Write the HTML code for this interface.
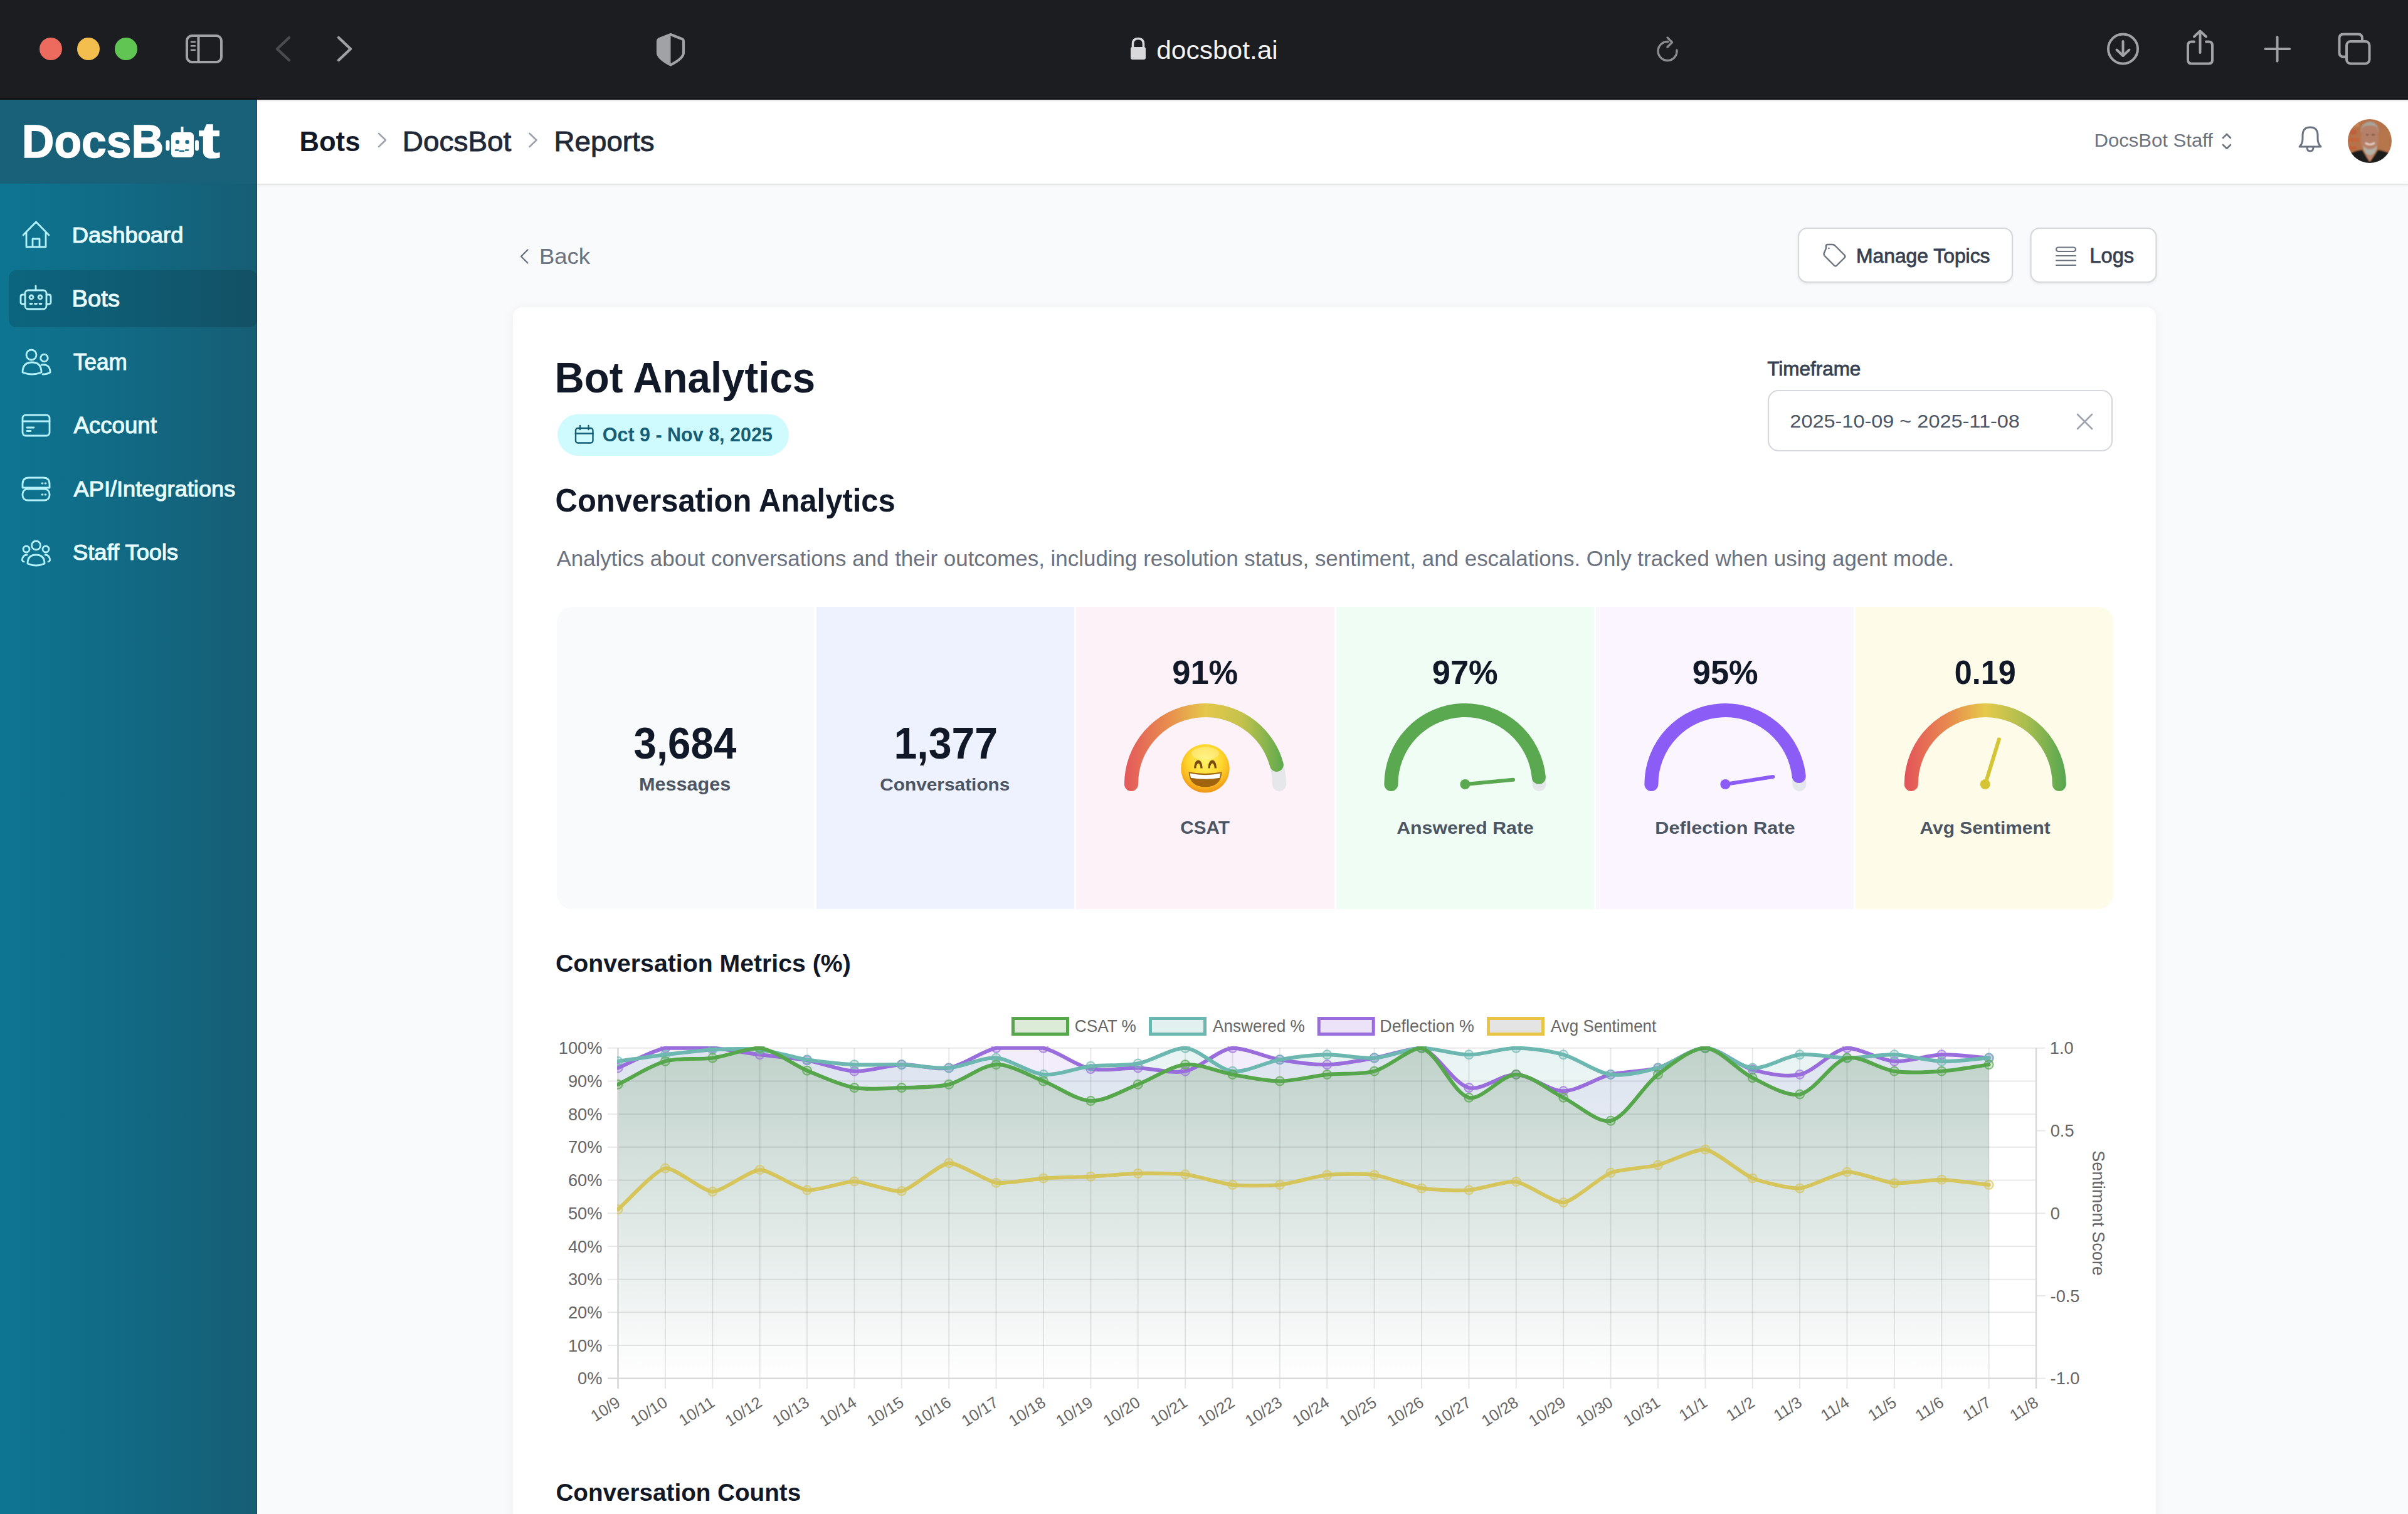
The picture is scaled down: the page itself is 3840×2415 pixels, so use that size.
<!DOCTYPE html>
<html><head><meta charset="utf-8"><title>DocsBot Reports</title>
<style>
html,body{margin:0;padding:0;width:3840px;height:2415px;overflow:hidden;background:#f9fafb}
svg{display:block}
text{font-family:"Liberation Sans",sans-serif;white-space:pre}
</style></head><body>
<svg width="3840" height="2415" viewBox="0 0 3840 2415">
<defs>
<linearGradient id="sbg" x1="0" y1="0" x2="410" y2="0" gradientUnits="userSpaceOnUse">
  <stop offset="0" stop-color="#0d7592"/>
  <stop offset="1" stop-color="#165d74"/>
</linearGradient>
<linearGradient id="sbg2" x1="0" y1="0" x2="0" y2="1">
  <stop offset="0" stop-color="#000" stop-opacity="0"/>
  <stop offset="1" stop-color="#000" stop-opacity="0"/>
</linearGradient>
<filter id="shCard" x="-5%" y="-5%" width="110%" height="110%">
  <feDropShadow dx="0" dy="2" stdDeviation="8" flood-color="#000" flood-opacity="0.05"/>
</filter>
<filter id="shBtn" x="-10%" y="-20%" width="120%" height="150%">
  <feDropShadow dx="0" dy="2" stdDeviation="2" flood-color="#000" flood-opacity="0.07"/>
</filter>
<filter id="shHdr" x="0" y="-50%" width="100%" height="200%">
  <feDropShadow dx="0" dy="2" stdDeviation="2" flood-color="#000" flood-opacity="0.06"/>
</filter>
<linearGradient id="gCsat" x1="1793" y1="0" x2="2052" y2="0" gradientUnits="userSpaceOnUse">
  <stop offset="0" stop-color="#e4585c"/>
  <stop offset="0.28" stop-color="#e88f4d"/>
  <stop offset="0.5" stop-color="#e5c74b"/>
  <stop offset="0.72" stop-color="#c5c24c"/>
  <stop offset="1" stop-color="#55a84e"/>
</linearGradient>
<linearGradient id="gSent" x1="3036" y1="0" x2="3296" y2="0" gradientUnits="userSpaceOnUse">
  <stop offset="0" stop-color="#e4525a"/>
  <stop offset="0.3" stop-color="#e8904e"/>
  <stop offset="0.5" stop-color="#e6c94a"/>
  <stop offset="0.75" stop-color="#a9bd4f"/>
  <stop offset="1" stop-color="#52a64f"/>
</linearGradient>
<radialGradient id="emo" cx="0.5" cy="0.35" r="0.62">
  <stop offset="0" stop-color="#fff36a"/>
  <stop offset="0.55" stop-color="#fed72e"/>
  <stop offset="0.85" stop-color="#f8b51e"/>
  <stop offset="1" stop-color="#f09a1a"/>
</radialGradient>
<clipPath id="avc"><circle cx="3779" cy="225" r="35"/></clipPath>
<filter id="avblur" x="-10%" y="-10%" width="120%" height="120%"><feGaussianBlur stdDeviation="0.9"/></filter>
<clipPath id="chartClip"><rect x="984" y="1669" width="2264" height="531"/></clipPath>
</defs>
<rect x="0" y="0" width="3840" height="2415" fill="#f9fafb"/>
<rect x="0" y="0" width="3840" height="159" fill="#1c1d20"/>
<rect x="0" y="157" width="3840" height="2" fill="#0b0c0e"/>
<rect x="0" y="159" width="410" height="2256" fill="url(#sbg)"/>
<rect x="0" y="159" width="410" height="134" fill="#186178"/>
<rect x="408" y="159" width="2" height="2256" fill="#000" fill-opacity="0.12"/>
<rect x="410" y="159" width="3430" height="135" fill="#ffffff" filter="url(#shHdr)"/>
<rect x="410" y="293" width="3430" height="2" fill="#e5e7eb"/>
<defs><linearGradient id="hdrTop" x1="0" y1="0" x2="0" y2="1"><stop offset="0" stop-color="#000" stop-opacity="0.13"/><stop offset="1" stop-color="#000" stop-opacity="0"/></linearGradient></defs>
<rect x="410" y="159" width="3430" height="4" fill="url(#hdrTop)"/>
<circle cx="81" cy="78" r="18" fill="#ed6a5e"/>
<circle cx="141" cy="78" r="18" fill="#f4be4f"/>
<circle cx="201" cy="78" r="18" fill="#61c554"/>
<rect x="298" y="57" width="55" height="42" rx="8" fill="none" stroke="#a1a2a6" stroke-width="4"/>
<line x1="316.5" y1="57" x2="316.5" y2="99" stroke="#a1a2a6" stroke-width="4"/>
<line x1="305" y1="66.7" x2="311" y2="66.7" stroke="#a1a2a6" stroke-width="2.6" stroke-linecap="round"/>
<line x1="305" y1="73.3" x2="311" y2="73.3" stroke="#a1a2a6" stroke-width="2.6" stroke-linecap="round"/>
<line x1="305" y1="79.8" x2="311" y2="79.8" stroke="#a1a2a6" stroke-width="2.6" stroke-linecap="round"/>
<polyline points="461,60 442,78 461,96" fill="none" stroke="#4a4b4f" stroke-width="4.4" stroke-linecap="round" stroke-linejoin="round"/>
<polyline points="540,60 559,78 540,96" fill="none" stroke="#a1a2a6" stroke-width="4.4" stroke-linecap="round" stroke-linejoin="round"/>
<path d="M1069.5,55 L1088.5,62.5 Q1090,63.5 1090,66 L1090,84 Q1090,93 1069.5,103.5 Q1049,93 1049,84 L1049,66 Q1049,63.5 1050.5,62.5 Z" fill="none" stroke="#a1a2a6" stroke-width="4.2" stroke-linejoin="round"/>
<path d="M1069.5,55 L1050.5,62.5 Q1049,63.5 1049,66 L1049,84 Q1049,93 1069.5,103.5 Z" fill="#a1a2a6"/>
<path d="M1806.5,76 L1806.5,70 Q1806.5,61.5 1815,61.5 Q1823.5,61.5 1823.5,70 L1823.5,76" fill="none" stroke="#d9d9db" stroke-width="3.6"/>
<rect x="1803" y="75" width="24" height="20" rx="3" fill="#d9d9db"/>
<text x="1844.19" y="93.5" font-size="40" font-weight="400" fill="#f4f4f6" textLength="193.62" lengthAdjust="spacingAndGlyphs">docsbot.ai</text>
<path d="M2674,80 A15,15 0 1 1 2660,66.5" fill="none" stroke="#8b8c8f" stroke-width="3.4" stroke-linecap="round"/>
<polyline points="2659,60 2666.5,67.5 2659,75" fill="none" stroke="#8b8c8f" stroke-width="3.4" stroke-linecap="round" stroke-linejoin="round"/>
<circle cx="3385.5" cy="78" r="23.5" fill="none" stroke="#a1a2a6" stroke-width="4"/>
<line x1="3385.5" y1="66" x2="3385.5" y2="88" stroke="#a1a2a6" stroke-width="4" stroke-linecap="round"/>
<polyline points="3375.5,79.5 3385.5,89 3395.5,79.5" fill="none" stroke="#a1a2a6" stroke-width="4" stroke-linecap="round" stroke-linejoin="round"/>
<path d="M3499,66.5 L3495,66.5 Q3489,66.5 3489,72.5 L3489,95.5 Q3489,101.5 3495,101.5 L3522,101.5 Q3528,101.5 3528,95.5 L3528,72.5 Q3528,66.5 3522,66.5 L3518,66.5" fill="none" stroke="#a1a2a6" stroke-width="4" stroke-linecap="round"/>
<line x1="3508.5" y1="50" x2="3508.5" y2="84" stroke="#a1a2a6" stroke-width="4" stroke-linecap="round"/>
<polyline points="3499,58.5 3508.5,49.5 3518,58.5" fill="none" stroke="#a1a2a6" stroke-width="4" stroke-linecap="round" stroke-linejoin="round"/>
<line x1="3631.5" y1="59" x2="3631.5" y2="97.5" stroke="#a1a2a6" stroke-width="4" stroke-linecap="round"/>
<line x1="3612.5" y1="78" x2="3651" y2="78" stroke="#a1a2a6" stroke-width="4" stroke-linecap="round"/>
<path d="M3741,90.5 L3737,90.5 Q3730.5,90.5 3730.5,84 L3730.5,61 Q3730.5,54.5 3737,54.5 L3760.5,54.5 Q3767,54.5 3767,61 L3767,65.5" fill="none" stroke="#a1a2a6" stroke-width="4"/>
<rect x="3742" y="66" width="36.5" height="35.5" rx="6.5" fill="none" stroke="#a1a2a6" stroke-width="4"/>
<text x="34.77" y="250.5" font-size="74.91" font-weight="700" fill="#ffffff" textLength="226.45" lengthAdjust="spacingAndGlyphs" stroke="#ffffff" stroke-width="1.5">DocsB</text>
<text x="316.72" y="250.5" font-size="79.69" font-weight="700" fill="#ffffff" textLength="34.11" lengthAdjust="spacingAndGlyphs" stroke="#ffffff" stroke-width="1.5">t</text>
<rect x="273" y="211" width="36" height="40" rx="6" fill="#fff"/>
<rect x="288.5" y="202" width="4" height="10" fill="#fff"/>
<rect x="264.5" y="223.5" width="6" height="17" rx="3" fill="#fff"/>
<rect x="311" y="223.5" width="6" height="17" rx="3" fill="#fff"/>
<circle cx="283" cy="226.5" r="3.2" fill="#176a82"/><circle cx="298.5" cy="226.5" r="3.2" fill="#176a82"/>
<path d="M280,239.5 h4 M287,241 h6 M296,239.5 h4" stroke="#176a82" stroke-width="2.6" stroke-linecap="round"/>
<rect x="14" y="431" width="396" height="91" rx="12" fill="#000" fill-opacity="0.13"/>
<text x="114.7" y="387" font-size="35.86" font-weight="400" fill="#e6fcff" textLength="177.65" lengthAdjust="spacingAndGlyphs" stroke="#e6fcff" stroke-width="1.1">Dashboard</text>
<text x="114.54" y="488.5" font-size="37.82" font-weight="400" fill="#e6fcff" textLength="76.53" lengthAdjust="spacingAndGlyphs" stroke="#e6fcff" stroke-width="1.1">Bots</text>
<text x="116.91" y="590" font-size="37.82" font-weight="400" fill="#e6fcff" textLength="85.89" lengthAdjust="spacingAndGlyphs" stroke="#e6fcff" stroke-width="1.1">Team</text>
<text x="117.61" y="690.5" font-size="37.82" font-weight="400" fill="#e6fcff" textLength="132.2" lengthAdjust="spacingAndGlyphs" stroke="#e6fcff" stroke-width="1.1">Account</text>
<text x="117.61" y="792" font-size="35.86" font-weight="400" fill="#e6fcff" textLength="257.67" lengthAdjust="spacingAndGlyphs" stroke="#e6fcff" stroke-width="1.1">API/Integrations</text>
<text x="116.07" y="893" font-size="35.86" font-weight="400" fill="#e6fcff" textLength="168.22" lengthAdjust="spacingAndGlyphs" stroke="#e6fcff" stroke-width="1.1">Staff Tools</text>
<path d="M37,375 L57.5,354 L78,375 M42,370 L42,394 L73,394 L73,370 M52,394 L52,381 L63,381 L63,394" fill="none" stroke="#b5f1fb" stroke-width="2.8" stroke-linecap="round" stroke-linejoin="round"/>
<g fill="none" stroke="#b5f1fb" stroke-width="2.8" stroke-linecap="round" stroke-linejoin="round"><rect x="40" y="463" width="34" height="30" rx="5"/><line x1="57" y1="456" x2="57" y2="463"/><path d="M40,470 h-4 q-3,0 -3,3 v9 q0,3 3,3 h4 M74,470 h4 q3,0 3,3 v9 q0,3 -3,3 h-4"/><circle cx="50" cy="474" r="3"/><circle cx="64" cy="474" r="3"/><path d="M48,484.5 h3 M55.5,484.5 h3 M63,484.5 h3"/></g>
<g fill="none" stroke="#b5f1fb" stroke-width="2.8" stroke-linecap="round" stroke-linejoin="round"><circle cx="50" cy="566" r="8"/><circle cx="70.5" cy="571" r="5.8"/><path d="M36,594 q0,-16 15,-16 q15,0 15,16 q-15,6 -30,0 z"/><path d="M66,582 q14,-2 14,12 q-5,3 -12,3"/></g>
<g fill="none" stroke="#b5f1fb" stroke-width="2.8" stroke-linecap="round" stroke-linejoin="round"><rect x="36" y="662" width="43" height="33" rx="5"/><line x1="36" y1="672" x2="79" y2="672"/><path d="M43,682 h11 M43,687.5 h6"/></g>
<g fill="none" stroke="#b5f1fb" stroke-width="2.8" stroke-linecap="round" stroke-linejoin="round"><path d="M36,772 q0,-10 10,-10 h23 q10,0 10,10 v6 h-43 z"/><rect x="36" y="780" width="43" height="18" rx="8"/><path d="M67,771 h1 M72,771 h1 M67,789 h1 M72,789 h1"/></g>
<g fill="none" stroke="#b5f1fb" stroke-width="2.8" stroke-linecap="round" stroke-linejoin="round"><circle cx="57.5" cy="870" r="7"/><circle cx="42" cy="876" r="5"/><circle cx="73" cy="876" r="5"/><path d="M44,899 q0,-14 13.5,-14 q13.5,0 13.5,14 q-13.5,6 -27,0 z"/><path d="M38,896 q-4,-1 -2,-6 q2,-5 7,-5 M77,896 q4,-1 2,-6 q-2,-5 -7,-5"/></g>
<text x="477.45" y="241" font-size="43.64" font-weight="700" fill="#111827" textLength="96.99" lengthAdjust="spacingAndGlyphs">Bots</text>
<polyline points="604,213 615,223.5 604,234" fill="none" stroke="#9ca3af" stroke-width="2.6" stroke-linecap="round" stroke-linejoin="round"/>
<text x="641.81" y="241" font-size="43.64" font-weight="400" fill="#1f2937" textLength="173.5" lengthAdjust="spacingAndGlyphs" stroke="#1f2937" stroke-width="0.9">DocsBot</text>
<polyline points="844.5,213 855.5,223.5 844.5,234" fill="none" stroke="#9ca3af" stroke-width="2.6" stroke-linecap="round" stroke-linejoin="round"/>
<text x="883.63" y="241" font-size="43.64" font-weight="400" fill="#1f2937" textLength="159.92" lengthAdjust="spacingAndGlyphs" stroke="#1f2937" stroke-width="0.9">Reports</text>
<text x="3339.44" y="234.4" font-size="29.48" font-weight="400" fill="#6b7280" textLength="189.52" lengthAdjust="spacingAndGlyphs">DocsBot Staff</text>
<polyline points="3545,220 3551,214 3557,220" fill="none" stroke="#6b7280" stroke-width="2.6" stroke-linecap="round" stroke-linejoin="round"/>
<polyline points="3545,231 3551,237 3557,231" fill="none" stroke="#6b7280" stroke-width="2.6" stroke-linecap="round" stroke-linejoin="round"/>
<path d="M3667,234 Q3672,229 3672,221 L3672,216 Q3672,203 3684,203 Q3696,203 3696,216 L3696,221 Q3696,229 3701,234 Z" fill="none" stroke="#6b7280" stroke-width="3" stroke-linejoin="round"/>
<path d="M3679,235 Q3679,241 3684,241 Q3689,241 3689,235" fill="none" stroke="#6b7280" stroke-width="3"/>
<g clip-path="url(#avc)"><g filter="url(#avblur)"><rect x="3740" y="185" width="80" height="80" fill="#b6734a"/><rect x="3744" y="207" width="14" height="7" fill="#bf5f3a"/><rect x="3746" y="220" width="16" height="6" fill="#c4653d"/><rect x="3744" y="233" width="14" height="6" fill="#c2623c"/><rect x="3750" y="196" width="12" height="6" fill="#c98456"/><rect x="3796" y="205" width="18" height="36" fill="#b5764b"/><path d="M3765,213 Q3763,197 3779,194 Q3794,196 3793,213 L3791,206 Q3779,200 3767,206 Z" fill="#a8a49c"/><path d="M3766,208 Q3766,200 3779,200 Q3792,200 3792,208 L3793,226 Q3792,238 3779,240 Q3766,238 3765,226 Z" fill="#b58068"/><path d="M3773,215 h4 M3782,215 h5" stroke="#6b4535" stroke-width="2"/><path d="M3772,228 Q3779,233 3787,228" fill="none" stroke="#f2e3d8" stroke-width="2.2"/><path d="M3768,232 Q3770,247 3779,248 Q3789,247 3791,232 Q3786,238 3779,238 Q3772,238 3768,232 Z" fill="#b3b0a6"/><path d="M3740,265 L3740,250 Q3752,240 3767,239 L3779,258 L3792,239 Q3808,241 3820,250 L3820,265 Z" fill="#1b1a1a"/><path d="M3767,239 L3779,258 L3792,239 Q3786,249 3779,249 Q3772,249 3767,239z" fill="#c08a70"/></g></g>
<polyline points="841.5,398.5 831,409 841.5,419.5" fill="none" stroke="#6b7280" stroke-width="2.4" stroke-linecap="round" stroke-linejoin="round"/>
<text x="859.99" y="421.4" font-size="34.48" font-weight="400" fill="#6b7280" textLength="81.03" lengthAdjust="spacingAndGlyphs">Back</text>
<rect x="2868" y="364" width="341" height="86" rx="14" fill="#fff" stroke="#d6d8dd" stroke-width="2.2" filter="url(#shBtn)"/>
<rect x="3238.5" y="364" width="200" height="86" rx="14" fill="#fff" stroke="#d6d8dd" stroke-width="2.2" filter="url(#shBtn)"/>
<path d="M2910,396 L2910,392.5 Q2910,390 2912.5,390 L2920,390 Q2922.5,390 2924.5,392 L2939.5,407 Q2941.5,409 2939.5,411 L2927,423.5 Q2925,425.5 2923,423.5 L2908,408.5 Q2906.5,407 2906.5,404.5 Z" fill="none" stroke="#6b7280" stroke-width="2.4" stroke-linejoin="round" transform="translate(2 0)"/>
<circle cx="2916.5" cy="396" r="1.3" fill="#6b7280"/>
<text x="2959.97" y="418.7" font-size="30.9" font-weight="400" fill="#374151" textLength="213.56" lengthAdjust="spacingAndGlyphs" stroke="#374151" stroke-width="0.8">Manage Topics</text>
<rect x="3279" y="394.5" width="31" height="6.5" rx="3.2" fill="none" stroke="#6b7280" stroke-width="2.2"/>
<line x1="3279" y1="408" x2="3310" y2="408" stroke="#6b7280" stroke-width="2.2" stroke-linecap="round"/>
<line x1="3279" y1="415.5" x2="3310" y2="415.5" stroke="#6b7280" stroke-width="2.2" stroke-linecap="round"/>
<line x1="3279" y1="423" x2="3310" y2="423" stroke="#6b7280" stroke-width="2.2" stroke-linecap="round"/>
<text x="3332.3" y="418.7" font-size="32.58" font-weight="400" fill="#374151" textLength="70.87" lengthAdjust="spacingAndGlyphs" stroke="#374151" stroke-width="0.8">Logs</text>
<rect x="818" y="490" width="2620" height="2000" rx="16" fill="#ffffff" filter="url(#shCard)"/>
<text x="884.58" y="625.7" font-size="68.97" font-weight="700" fill="#111827" textLength="415.68" lengthAdjust="spacingAndGlyphs">Bot Analytics</text>
<rect x="889" y="660.5" width="369" height="66.5" rx="33.25" fill="#cffafe"/>
<g fill="none" stroke="#155e75" stroke-width="2.4" stroke-linecap="round"><rect x="918" y="683" width="27.5" height="23.5" rx="3.5"/><line x1="918" y1="691.5" x2="945.5" y2="691.5"/><line x1="925" y1="679" x2="925" y2="685"/><line x1="938.5" y1="679" x2="938.5" y2="685"/></g>
<text x="960.78" y="703.7" font-size="30.97" font-weight="700" fill="#155e75" textLength="271.08" lengthAdjust="spacingAndGlyphs">Oct 9 - Nov 8, 2025</text>
<text x="2818.29" y="599" font-size="31.03" font-weight="400" fill="#374151" textLength="149.09" lengthAdjust="spacingAndGlyphs" stroke="#374151" stroke-width="0.8">Timeframe</text>
<rect x="2820" y="623" width="548" height="96" rx="16" fill="#fff" stroke="#d6d8dd" stroke-width="2.2"/>
<text x="2854.38" y="682.3" font-size="30.11" font-weight="400" fill="#4b5563" textLength="366.54" lengthAdjust="spacingAndGlyphs">2025-10-09 ~ 2025-11-08</text>
<path d="M3313,661 L3336,684 M3336,661 L3313,684" stroke="#9ca3af" stroke-width="2.6" stroke-linecap="round"/>
<text x="885.54" y="815.8" font-size="51.03" font-weight="700" fill="#111827" textLength="542.22" lengthAdjust="spacingAndGlyphs">Conversation Analytics</text>
<text x="887.41" y="903.4" font-size="34.48" font-weight="400" fill="#6b7280" textLength="2228.77" lengthAdjust="spacingAndGlyphs">Analytics about conversations and their outcomes, including resolution status, sentiment, and escalations. Only tracked when using agent mode.</text>
<clipPath id="gridClip"><rect x="888" y="968" width="2482" height="482" rx="24"/></clipPath>
<g clip-path="url(#gridClip)">
<rect x="888" y="968" width="410" height="482" fill="#f8fafc"/>
<rect x="1302" y="968" width="411" height="482" fill="#eef2ff"/>
<rect x="1716" y="968" width="412" height="482" fill="#fdf2f8"/>
<rect x="2131" y="968" width="411" height="482" fill="#f0fdf4"/>
<rect x="2545" y="968" width="411" height="482" fill="#faf5ff"/>
<rect x="2959" y="968" width="411" height="482" fill="#fefce8"/>
</g>
<text x="1010.53" y="1209.5" font-size="70.97" font-weight="700" fill="#111827" textLength="163.8" lengthAdjust="spacingAndGlyphs">3,684</text>
<text x="1018.93" y="1260.8" font-size="29.09" font-weight="700" fill="#4b5563" textLength="146.32" lengthAdjust="spacingAndGlyphs">Messages</text>
<text x="1425.46" y="1209.5" font-size="70.97" font-weight="700" fill="#111827" textLength="165.76" lengthAdjust="spacingAndGlyphs">1,377</text>
<text x="1403.21" y="1260.8" font-size="27.59" font-weight="700" fill="#4b5563" textLength="207.23" lengthAdjust="spacingAndGlyphs">Conversations</text>
<path d="M1804,1251 A118,118 0 0 1 2040,1251" fill="none" stroke="#e5e7eb" stroke-width="22" stroke-linecap="round"/>
<path d="M1804,1251 A118,118 0 0 1 2035.82,1219.86" fill="none" stroke="url(#gCsat)" stroke-width="22" stroke-linecap="round"/>
<text x="1869.26" y="1091.4" font-size="53.05" font-weight="700" fill="#111827" textLength="105.03" lengthAdjust="spacingAndGlyphs">91%</text>
<text x="1882.31" y="1329.6" font-size="29.53" font-weight="700" fill="#4b5563" textLength="78.5" lengthAdjust="spacingAndGlyphs">CSAT</text>
<path d="M2218.4,1251 A118,118 0 0 1 2454.4,1251" fill="none" stroke="#e5e7eb" stroke-width="22" stroke-linecap="round"/>
<path d="M2218.4,1251 A118,118 0 0 1 2453.88,1239.9" fill="none" stroke="#5aa84f" stroke-width="22" stroke-linecap="round"/>
<text x="2283.72" y="1091.4" font-size="53.05" font-weight="700" fill="#111827" textLength="104.93" lengthAdjust="spacingAndGlyphs">97%</text>
<text x="2227.29" y="1329.6" font-size="28.41" font-weight="700" fill="#4b5563" textLength="218.51" lengthAdjust="spacingAndGlyphs">Answered Rate</text>
<line x1="2336.4" y1="1251" x2="2413.06" y2="1243.75" stroke="#5aa84f" stroke-width="6" stroke-linecap="round"/>
<circle cx="2336.4" cy="1251" r="8" fill="#5aa84f"/>
<path d="M2633.4,1251 A118,118 0 0 1 2869.4,1251" fill="none" stroke="#e5e7eb" stroke-width="22" stroke-linecap="round"/>
<path d="M2633.4,1251 A118,118 0 0 1 2868.69,1238.05" fill="none" stroke="#8b5cf6" stroke-width="22" stroke-linecap="round"/>
<text x="2698.72" y="1091.4" font-size="53.05" font-weight="700" fill="#111827" textLength="104.93" lengthAdjust="spacingAndGlyphs">95%</text>
<text x="2639.33" y="1329.6" font-size="28.41" font-weight="700" fill="#4b5563" textLength="223.13" lengthAdjust="spacingAndGlyphs">Deflection Rate</text>
<line x1="2751.4" y1="1251" x2="2827.45" y2="1238.95" stroke="#8b5cf6" stroke-width="6" stroke-linecap="round"/>
<circle cx="2751.4" cy="1251" r="8" fill="#8b5cf6"/>
<path d="M3047.8,1251 A118,118 0 0 1 3283.8,1251" fill="none" stroke="#e5e7eb" stroke-width="22" stroke-linecap="round"/>
<path d="M3047.8,1251 A118,118 0 0 1 3283.8,1251" fill="none" stroke="url(#gSent)" stroke-width="22" stroke-linecap="round"/>
<text x="3116.74" y="1091.4" font-size="53.05" font-weight="700" fill="#111827" textLength="97.94" lengthAdjust="spacingAndGlyphs">0.19</text>
<text x="3061.55" y="1329.6" font-size="28.41" font-weight="700" fill="#4b5563" textLength="208.17" lengthAdjust="spacingAndGlyphs">Avg Sentiment</text>
<line x1="3165.8" y1="1251" x2="3187.85" y2="1179.32" stroke="#d5c436" stroke-width="6" stroke-linecap="round"/>
<circle cx="3165.8" cy="1251" r="8" fill="#d5c436"/>
<g transform="translate(1922 1225.8)"><circle r="38.8" fill="url(#emo)"/><ellipse cx="0" cy="-24" rx="22" ry="10" fill="#fffbd0" fill-opacity="0.35"/><path d="M-17.8,-0.3 C-17.5,-17.5 -4.7,-17.5 -4.4,-0.3 L-7.6,-0.3 C-8.2,-10.5 -14,-10.5 -14.6,-0.3 Z" fill="#7a4a0a"/><path d="M4.6,-0.3 C4.9,-17.5 17.7,-17.5 18,-0.3 L14.8,-0.3 C14.2,-10.5 8.4,-10.5 7.8,-0.3 Z" fill="#7a4a0a"/><path d="M-26.5,5.5 Q0,11 26.5,5.5 Q25,29.5 0,29.5 Q-25,29.5 -26.5,5.5 Z" fill="#a0640f"/><path d="M-24.5,7.8 Q0,13 24.5,7.8 L23,15 Q0,19 -23,15 Z" fill="#ffffff"/></g>
<text x="885.93" y="1550" font-size="39.17" font-weight="700" fill="#111827" textLength="470.84" lengthAdjust="spacingAndGlyphs">Conversation Metrics (%)</text>
<defs>
<linearGradient id="fCsat" x1="0" y1="1671.8" x2="0" y2="2198.7" gradientUnits="userSpaceOnUse">
 <stop offset="0" stop-color="#6fa062" stop-opacity="0.26"/><stop offset="1" stop-color="#7db26d" stop-opacity="0.0"/></linearGradient>
<linearGradient id="fAnsw" x1="0" y1="1671.8" x2="0" y2="2198.7" gradientUnits="userSpaceOnUse">
 <stop offset="0" stop-color="#6cb8b1" stop-opacity="0.16"/><stop offset="1" stop-color="#6cb8b1" stop-opacity="0.0"/></linearGradient>
<linearGradient id="fDefl" x1="0" y1="1671.8" x2="0" y2="2198.7" gradientUnits="userSpaceOnUse">
 <stop offset="0" stop-color="#9a6ddd" stop-opacity="0.13"/><stop offset="1" stop-color="#9a6ddd" stop-opacity="0.0"/></linearGradient>
<linearGradient id="fSent" x1="0" y1="1671.8" x2="0" y2="2198.7" gradientUnits="userSpaceOnUse">
 <stop offset="0" stop-color="#888" stop-opacity="0.0"/><stop offset="1" stop-color="#888" stop-opacity="0.0"/></linearGradient>
</defs>
<g clip-path="url(#chartClip)">
<path d="M985.5,1703.41 C1008.12,1693.93 1037.35,1676.73 1060.88,1671.8 C1082.58,1671.8 1113.76,1671.8 1136.27,1671.8 C1158.99,1673.39 1189,1679.41 1211.65,1682.34 C1234.23,1685.26 1264.63,1687.38 1287.03,1691.3 C1309.86,1695.28 1339.62,1707.65 1362.42,1708.68 C1384.85,1709.7 1415.1,1698.94 1437.8,1698.14 C1460.33,1697.36 1491.46,1707.21 1513.18,1703.41 C1536.69,1699.31 1565.04,1676.73 1588.57,1671.8 C1610.27,1671.8 1642.34,1671.8 1663.95,1671.8 C1687.57,1677 1715.72,1700.04 1739.33,1704.99 C1760.95,1709.53 1792.13,1702.86 1814.72,1703.41 C1837.36,1703.97 1868.67,1713.18 1890.1,1708.68 C1913.9,1703.69 1941.98,1674.67 1965.48,1671.8 C1987.21,1671.8 2017.98,1686.24 2040.87,1690.24 C2063.21,1694.15 2093.68,1698.54 2116.25,1698.14 C2138.91,1697.75 2169.15,1691.54 2191.63,1687.61 C2214.38,1683.63 2247.16,1671.8 2267.02,1671.8 C2292.39,1679.78 2317.21,1727.99 2342.4,1735.03 C2362.44,1740.63 2395.39,1713.17 2417.78,1713.95 C2440.62,1714.75 2470.55,1740.3 2493.17,1740.3 C2515.78,1740.3 2545.39,1719.62 2568.55,1713.95 C2590.62,1708.55 2622.12,1709.51 2643.93,1703.41 C2667.35,1696.87 2696.85,1671.8 2719.32,1671.8 C2742.08,1672.2 2771.09,1699.45 2794.7,1706.05 C2816.32,1712.09 2848.94,1718.75 2870.08,1713.95 C2894.17,1708.48 2921.74,1675.12 2945.47,1671.8 C2966.97,1671.8 2997.92,1691.27 3020.85,1692.88 C3043.15,1694.43 3073.54,1683.13 3096.23,1682.34 C3118.77,1681.55 3149,1686.03 3171.62,1687.61 L3171.62,2198.7 L985.5,2198.7 Z" fill="url(#fDefl)"/>
<path d="M985.5,1692.88 C1008.12,1689.71 1038.22,1685.11 1060.88,1682.34 C1083.45,1679.58 1113.59,1675.62 1136.27,1674.43 C1158.82,1673.25 1189.28,1672.09 1211.65,1674.43 C1234.51,1676.83 1264.24,1686.66 1287.03,1690.24 C1309.47,1693.77 1339.74,1696.96 1362.42,1698.14 C1384.97,1699.33 1415.21,1697.36 1437.8,1698.14 C1460.44,1698.94 1490.78,1704.98 1513.18,1703.41 C1536.01,1701.82 1566.36,1686.05 1588.57,1687.61 C1611.59,1689.22 1640.85,1711.93 1663.95,1713.95 C1686.08,1715.89 1716.57,1703.41 1739.33,1700.78 C1761.8,1698.19 1792.66,1700.8 1814.72,1696.56 C1837.89,1692.11 1868.12,1671.8 1890.1,1671.8 C1913.35,1673.67 1941.98,1705.81 1965.48,1708.68 C1987.21,1711.34 2017.98,1694.24 2040.87,1690.24 C2063.21,1686.34 2093.6,1682.73 2116.25,1682.34 C2138.83,1681.94 2169.23,1689.17 2191.63,1687.61 C2214.46,1686.01 2244.27,1672.6 2267.02,1671.8 C2289.5,1671.8 2319.79,1682.34 2342.4,1682.34 C2365.02,1682.34 2395.17,1671.8 2417.78,1671.8 C2440.4,1671.8 2471.36,1676.24 2493.17,1682.34 C2516.59,1688.89 2545.13,1710.68 2568.55,1713.95 C2590.36,1717 2622.12,1709.51 2643.93,1703.41 C2667.35,1696.87 2696.7,1671.8 2719.32,1671.8 C2741.93,1671.8 2771.59,1701.8 2794.7,1703.41 C2816.82,1704.96 2847.07,1684.75 2870.08,1682.34 C2892.3,1680.01 2922.85,1687.61 2945.47,1687.61 C2968.08,1687.61 2998.32,1681.55 3020.85,1682.34 C3043.55,1683.13 3073.54,1692.08 3096.23,1692.88 C3118.77,1693.66 3149,1689.19 3171.62,1687.61 L3171.62,2198.7 L985.5,2198.7 Z" fill="url(#fAnsw)"/>
<path d="M985.5,1729.76 C1008.12,1718.69 1037.08,1699.53 1060.88,1692.88 C1082.31,1686.88 1113.87,1690.74 1136.27,1687.61 C1159.1,1684.42 1189.94,1671.8 1211.65,1671.8 C1235.17,1674.92 1263.97,1697.96 1287.03,1707.63 C1309.2,1716.92 1339.1,1730.79 1362.42,1735.03 C1384.33,1739.01 1415.21,1735.82 1437.8,1735.03 C1460.44,1734.24 1491.46,1735.07 1513.18,1729.76 C1536.69,1724.01 1565.69,1698.94 1588.57,1698.14 C1610.92,1697.36 1641.6,1715.9 1663.95,1724.49 C1686.83,1733.29 1716.45,1755.3 1739.33,1756.1 C1761.68,1756.89 1792.37,1738.35 1814.72,1729.76 C1837.6,1720.96 1866.81,1700.59 1890.1,1698.14 C1912.04,1695.84 1942.73,1709.98 1965.48,1713.95 C1987.96,1717.88 2018.25,1724.49 2040.87,1724.49 C2063.48,1724.49 2093.55,1716.33 2116.25,1713.95 C2138.78,1711.59 2170.2,1714.67 2191.63,1708.68 C2215.43,1702.03 2247.36,1671.8 2267.02,1671.8 C2292.59,1678.95 2316.82,1743.68 2342.4,1750.84 C2362.05,1756.33 2395.17,1713.95 2417.78,1713.95 C2440.4,1713.95 2470.55,1739.77 2493.17,1750.84 C2515.78,1761.9 2548.51,1792.62 2568.55,1787.72 C2593.74,1781.56 2619.07,1733.07 2643.93,1713.95 C2664.3,1698.3 2697.05,1671.8 2719.32,1671.8 C2742.28,1672.6 2770.85,1707.55 2794.7,1719.22 C2816.08,1729.68 2849.44,1749.9 2870.08,1745.57 C2894.67,1740.41 2920.66,1693.68 2945.47,1687.61 C2965.89,1682.61 2997.81,1705.46 3020.85,1708.68 C3043.04,1711.78 3073.73,1710.26 3096.23,1708.68 C3118.96,1707.09 3149,1701.31 3171.62,1698.14 L3171.62,2198.7 L985.5,2198.7 Z" fill="url(#fCsat)"/>
</g>
<line x1="969" y1="2198.7" x2="3247.0" y2="2198.7" stroke="#000000" stroke-opacity="0.09" stroke-width="2"/>
<text x="921.09" y="2208.3" font-size="27.24" font-weight="400" fill="#666666" textLength="39.37" lengthAdjust="spacingAndGlyphs">0%</text>
<line x1="969" y1="2146.01" x2="3247.0" y2="2146.01" stroke="#000000" stroke-opacity="0.09" stroke-width="2"/>
<text x="905.91" y="2155.61" font-size="27.24" font-weight="400" fill="#666666" textLength="54.52" lengthAdjust="spacingAndGlyphs">10%</text>
<line x1="969" y1="2093.32" x2="3247.0" y2="2093.32" stroke="#000000" stroke-opacity="0.09" stroke-width="2"/>
<text x="905.91" y="2102.92" font-size="27.24" font-weight="400" fill="#666666" textLength="54.52" lengthAdjust="spacingAndGlyphs">20%</text>
<line x1="969" y1="2040.63" x2="3247.0" y2="2040.63" stroke="#000000" stroke-opacity="0.09" stroke-width="2"/>
<text x="905.91" y="2050.23" font-size="27.24" font-weight="400" fill="#666666" textLength="54.52" lengthAdjust="spacingAndGlyphs">30%</text>
<line x1="969" y1="1987.94" x2="3247.0" y2="1987.94" stroke="#000000" stroke-opacity="0.09" stroke-width="2"/>
<text x="905.91" y="1997.54" font-size="27.24" font-weight="400" fill="#666666" textLength="54.52" lengthAdjust="spacingAndGlyphs">40%</text>
<line x1="969" y1="1935.25" x2="3247.0" y2="1935.25" stroke="#000000" stroke-opacity="0.09" stroke-width="2"/>
<text x="905.91" y="1944.85" font-size="27.24" font-weight="400" fill="#666666" textLength="54.52" lengthAdjust="spacingAndGlyphs">50%</text>
<line x1="969" y1="1882.56" x2="3247.0" y2="1882.56" stroke="#000000" stroke-opacity="0.09" stroke-width="2"/>
<text x="905.91" y="1892.16" font-size="27.24" font-weight="400" fill="#666666" textLength="54.52" lengthAdjust="spacingAndGlyphs">60%</text>
<line x1="969" y1="1829.87" x2="3247.0" y2="1829.87" stroke="#000000" stroke-opacity="0.09" stroke-width="2"/>
<text x="905.91" y="1839.47" font-size="27.24" font-weight="400" fill="#666666" textLength="54.52" lengthAdjust="spacingAndGlyphs">70%</text>
<line x1="969" y1="1777.18" x2="3247.0" y2="1777.18" stroke="#000000" stroke-opacity="0.09" stroke-width="2"/>
<text x="905.91" y="1786.78" font-size="27.24" font-weight="400" fill="#666666" textLength="54.52" lengthAdjust="spacingAndGlyphs">80%</text>
<line x1="969" y1="1724.49" x2="3247.0" y2="1724.49" stroke="#000000" stroke-opacity="0.09" stroke-width="2"/>
<text x="905.91" y="1734.09" font-size="27.24" font-weight="400" fill="#666666" textLength="54.52" lengthAdjust="spacingAndGlyphs">90%</text>
<line x1="969" y1="1671.8" x2="3247.0" y2="1671.8" stroke="#000000" stroke-opacity="0.09" stroke-width="2"/>
<text x="890.79" y="1681.4" font-size="27.24" font-weight="400" fill="#666666" textLength="69.67" lengthAdjust="spacingAndGlyphs">100%</text>
<line x1="3247.0" y1="1671.8" x2="3262" y2="1671.8" stroke="#000000" stroke-opacity="0.09" stroke-width="2"/>
<text x="3268.76" y="1681.4" font-size="27.24" font-weight="400" fill="#666666" textLength="37.87" lengthAdjust="spacingAndGlyphs">1.0</text>
<line x1="3247.0" y1="1803.53" x2="3262" y2="1803.53" stroke="#000000" stroke-opacity="0.09" stroke-width="2"/>
<text x="3269.71" y="1813.12" font-size="27.24" font-weight="400" fill="#666666" textLength="37.87" lengthAdjust="spacingAndGlyphs">0.5</text>
<line x1="3247.0" y1="1935.25" x2="3262" y2="1935.25" stroke="#000000" stroke-opacity="0.09" stroke-width="2"/>
<text x="3269.71" y="1944.85" font-size="27.24" font-weight="400" fill="#666666" textLength="15.15" lengthAdjust="spacingAndGlyphs">0</text>
<line x1="3247.0" y1="2066.97" x2="3262" y2="2066.97" stroke="#000000" stroke-opacity="0.09" stroke-width="2"/>
<text x="3269.57" y="2076.57" font-size="27.24" font-weight="400" fill="#666666" textLength="46.94" lengthAdjust="spacingAndGlyphs">-0.5</text>
<line x1="3247.0" y1="2198.7" x2="3262" y2="2198.7" stroke="#000000" stroke-opacity="0.09" stroke-width="2"/>
<text x="3269.57" y="2208.3" font-size="27.24" font-weight="400" fill="#666666" textLength="46.94" lengthAdjust="spacingAndGlyphs">-1.0</text>
<line x1="985.5" y1="1671.8" x2="985.5" y2="2215" stroke="#000000" stroke-opacity="0.09" stroke-width="2"/>
<line x1="1060.88" y1="1671.8" x2="1060.88" y2="2215" stroke="#000000" stroke-opacity="0.09" stroke-width="2"/>
<line x1="1136.27" y1="1671.8" x2="1136.27" y2="2215" stroke="#000000" stroke-opacity="0.09" stroke-width="2"/>
<line x1="1211.65" y1="1671.8" x2="1211.65" y2="2215" stroke="#000000" stroke-opacity="0.09" stroke-width="2"/>
<line x1="1287.03" y1="1671.8" x2="1287.03" y2="2215" stroke="#000000" stroke-opacity="0.09" stroke-width="2"/>
<line x1="1362.42" y1="1671.8" x2="1362.42" y2="2215" stroke="#000000" stroke-opacity="0.09" stroke-width="2"/>
<line x1="1437.8" y1="1671.8" x2="1437.8" y2="2215" stroke="#000000" stroke-opacity="0.09" stroke-width="2"/>
<line x1="1513.18" y1="1671.8" x2="1513.18" y2="2215" stroke="#000000" stroke-opacity="0.09" stroke-width="2"/>
<line x1="1588.57" y1="1671.8" x2="1588.57" y2="2215" stroke="#000000" stroke-opacity="0.09" stroke-width="2"/>
<line x1="1663.95" y1="1671.8" x2="1663.95" y2="2215" stroke="#000000" stroke-opacity="0.09" stroke-width="2"/>
<line x1="1739.33" y1="1671.8" x2="1739.33" y2="2215" stroke="#000000" stroke-opacity="0.09" stroke-width="2"/>
<line x1="1814.72" y1="1671.8" x2="1814.72" y2="2215" stroke="#000000" stroke-opacity="0.09" stroke-width="2"/>
<line x1="1890.1" y1="1671.8" x2="1890.1" y2="2215" stroke="#000000" stroke-opacity="0.09" stroke-width="2"/>
<line x1="1965.48" y1="1671.8" x2="1965.48" y2="2215" stroke="#000000" stroke-opacity="0.09" stroke-width="2"/>
<line x1="2040.87" y1="1671.8" x2="2040.87" y2="2215" stroke="#000000" stroke-opacity="0.09" stroke-width="2"/>
<line x1="2116.25" y1="1671.8" x2="2116.25" y2="2215" stroke="#000000" stroke-opacity="0.09" stroke-width="2"/>
<line x1="2191.63" y1="1671.8" x2="2191.63" y2="2215" stroke="#000000" stroke-opacity="0.09" stroke-width="2"/>
<line x1="2267.02" y1="1671.8" x2="2267.02" y2="2215" stroke="#000000" stroke-opacity="0.09" stroke-width="2"/>
<line x1="2342.4" y1="1671.8" x2="2342.4" y2="2215" stroke="#000000" stroke-opacity="0.09" stroke-width="2"/>
<line x1="2417.78" y1="1671.8" x2="2417.78" y2="2215" stroke="#000000" stroke-opacity="0.09" stroke-width="2"/>
<line x1="2493.17" y1="1671.8" x2="2493.17" y2="2215" stroke="#000000" stroke-opacity="0.09" stroke-width="2"/>
<line x1="2568.55" y1="1671.8" x2="2568.55" y2="2215" stroke="#000000" stroke-opacity="0.09" stroke-width="2"/>
<line x1="2643.93" y1="1671.8" x2="2643.93" y2="2215" stroke="#000000" stroke-opacity="0.09" stroke-width="2"/>
<line x1="2719.32" y1="1671.8" x2="2719.32" y2="2215" stroke="#000000" stroke-opacity="0.09" stroke-width="2"/>
<line x1="2794.7" y1="1671.8" x2="2794.7" y2="2215" stroke="#000000" stroke-opacity="0.09" stroke-width="2"/>
<line x1="2870.08" y1="1671.8" x2="2870.08" y2="2215" stroke="#000000" stroke-opacity="0.09" stroke-width="2"/>
<line x1="2945.47" y1="1671.8" x2="2945.47" y2="2215" stroke="#000000" stroke-opacity="0.09" stroke-width="2"/>
<line x1="3020.85" y1="1671.8" x2="3020.85" y2="2215" stroke="#000000" stroke-opacity="0.09" stroke-width="2"/>
<line x1="3096.23" y1="1671.8" x2="3096.23" y2="2215" stroke="#000000" stroke-opacity="0.09" stroke-width="2"/>
<line x1="3171.62" y1="1671.8" x2="3171.62" y2="2215" stroke="#000000" stroke-opacity="0.09" stroke-width="2"/>
<line x1="3247" y1="1671.8" x2="3247" y2="2215" stroke="#000000" stroke-opacity="0.09" stroke-width="2"/>
<line x1="985.5" y1="1671.8" x2="985.5" y2="2215" stroke="#d9d9d9" stroke-width="2.5"/>
<line x1="3247.0" y1="1671.8" x2="3247.0" y2="2215" stroke="#d9d9d9" stroke-width="2.5"/>
<line x1="969" y1="2198.7" x2="3247.0" y2="2198.7" stroke="#d9d9d9" stroke-width="2.5"/>
<g clip-path="url(#chartClip)">
<path d="M985.5,1929.19 C1000.58,1916.07 1044.5,1866.68 1060.88,1863.59 C1074.66,1860.99 1121.1,1900.5 1136.27,1900.74 C1151.25,1900.97 1196.49,1866.2 1211.65,1865.96 C1226.64,1865.73 1271.44,1896.46 1287.03,1898.37 C1301.6,1900.15 1347.37,1884.25 1362.42,1884.4 C1377.52,1884.56 1423.7,1902.68 1437.8,1899.95 C1453.86,1896.83 1497.58,1856.52 1513.18,1855.16 C1527.73,1853.89 1572.92,1884.26 1588.57,1886.78 C1603.07,1889.11 1648.84,1880.4 1663.95,1879.4 C1679,1878.4 1724.27,1877.53 1739.33,1876.76 C1754.42,1876 1799.63,1872.1 1814.72,1871.76 C1829.78,1871.42 1875.2,1871.54 1890.1,1873.34 C1905.35,1875.18 1950.23,1888.26 1965.48,1889.94 C1980.38,1891.58 2025.95,1891.5 2040.87,1889.94 C2056.11,1888.34 2101.01,1875.73 2116.25,1874.13 C2131.16,1872.57 2176.85,1872.04 2191.63,1874.13 C2207,1876.3 2251.66,1893 2267.02,1895.47 C2281.81,1897.85 2327.44,1899.41 2342.4,1898.37 C2357.59,1897.31 2403.26,1883.03 2417.78,1884.93 C2433.41,1886.98 2478.68,1919.49 2493.17,1918.13 C2508.83,1916.65 2552.32,1877.14 2568.55,1870.7 C2582.47,1865.18 2629.14,1861.97 2643.93,1858.32 C2659.3,1854.54 2705.04,1831.56 2719.32,1833.56 C2735.19,1835.78 2778.61,1872.79 2794.7,1879.4 C2808.76,1885.17 2855.27,1896.45 2870.08,1895.47 C2885.42,1894.45 2930.17,1870.22 2945.47,1869.39 C2960.32,1868.58 3005.59,1886.05 3020.85,1887.3 C3035.74,1888.52 3081.18,1881.51 3096.23,1881.77 C3111.33,1882.03 3156.54,1888.3 3171.62,1889.94" fill="none" stroke="#d5c55a" stroke-width="6" stroke-linejoin="round" stroke-linecap="round"/>
<circle cx="985.5" cy="1929.19" r="7" fill="#d5c55a" fill-opacity="0.25" stroke="#d5c55a" stroke-opacity="0.7" stroke-width="2"/>
<circle cx="1060.88" cy="1863.59" r="7" fill="#d5c55a" fill-opacity="0.25" stroke="#d5c55a" stroke-opacity="0.7" stroke-width="2"/>
<circle cx="1136.27" cy="1900.74" r="7" fill="#d5c55a" fill-opacity="0.25" stroke="#d5c55a" stroke-opacity="0.7" stroke-width="2"/>
<circle cx="1211.65" cy="1865.96" r="7" fill="#d5c55a" fill-opacity="0.25" stroke="#d5c55a" stroke-opacity="0.7" stroke-width="2"/>
<circle cx="1287.03" cy="1898.37" r="7" fill="#d5c55a" fill-opacity="0.25" stroke="#d5c55a" stroke-opacity="0.7" stroke-width="2"/>
<circle cx="1362.42" cy="1884.4" r="7" fill="#d5c55a" fill-opacity="0.25" stroke="#d5c55a" stroke-opacity="0.7" stroke-width="2"/>
<circle cx="1437.8" cy="1899.95" r="7" fill="#d5c55a" fill-opacity="0.25" stroke="#d5c55a" stroke-opacity="0.7" stroke-width="2"/>
<circle cx="1513.18" cy="1855.16" r="7" fill="#d5c55a" fill-opacity="0.25" stroke="#d5c55a" stroke-opacity="0.7" stroke-width="2"/>
<circle cx="1588.57" cy="1886.78" r="7" fill="#d5c55a" fill-opacity="0.25" stroke="#d5c55a" stroke-opacity="0.7" stroke-width="2"/>
<circle cx="1663.95" cy="1879.4" r="7" fill="#d5c55a" fill-opacity="0.25" stroke="#d5c55a" stroke-opacity="0.7" stroke-width="2"/>
<circle cx="1739.33" cy="1876.76" r="7" fill="#d5c55a" fill-opacity="0.25" stroke="#d5c55a" stroke-opacity="0.7" stroke-width="2"/>
<circle cx="1814.72" cy="1871.76" r="7" fill="#d5c55a" fill-opacity="0.25" stroke="#d5c55a" stroke-opacity="0.7" stroke-width="2"/>
<circle cx="1890.1" cy="1873.34" r="7" fill="#d5c55a" fill-opacity="0.25" stroke="#d5c55a" stroke-opacity="0.7" stroke-width="2"/>
<circle cx="1965.48" cy="1889.94" r="7" fill="#d5c55a" fill-opacity="0.25" stroke="#d5c55a" stroke-opacity="0.7" stroke-width="2"/>
<circle cx="2040.87" cy="1889.94" r="7" fill="#d5c55a" fill-opacity="0.25" stroke="#d5c55a" stroke-opacity="0.7" stroke-width="2"/>
<circle cx="2116.25" cy="1874.13" r="7" fill="#d5c55a" fill-opacity="0.25" stroke="#d5c55a" stroke-opacity="0.7" stroke-width="2"/>
<circle cx="2191.63" cy="1874.13" r="7" fill="#d5c55a" fill-opacity="0.25" stroke="#d5c55a" stroke-opacity="0.7" stroke-width="2"/>
<circle cx="2267.02" cy="1895.47" r="7" fill="#d5c55a" fill-opacity="0.25" stroke="#d5c55a" stroke-opacity="0.7" stroke-width="2"/>
<circle cx="2342.4" cy="1898.37" r="7" fill="#d5c55a" fill-opacity="0.25" stroke="#d5c55a" stroke-opacity="0.7" stroke-width="2"/>
<circle cx="2417.78" cy="1884.93" r="7" fill="#d5c55a" fill-opacity="0.25" stroke="#d5c55a" stroke-opacity="0.7" stroke-width="2"/>
<circle cx="2493.17" cy="1918.13" r="7" fill="#d5c55a" fill-opacity="0.25" stroke="#d5c55a" stroke-opacity="0.7" stroke-width="2"/>
<circle cx="2568.55" cy="1870.7" r="7" fill="#d5c55a" fill-opacity="0.25" stroke="#d5c55a" stroke-opacity="0.7" stroke-width="2"/>
<circle cx="2643.93" cy="1858.32" r="7" fill="#d5c55a" fill-opacity="0.25" stroke="#d5c55a" stroke-opacity="0.7" stroke-width="2"/>
<circle cx="2719.32" cy="1833.56" r="7" fill="#d5c55a" fill-opacity="0.25" stroke="#d5c55a" stroke-opacity="0.7" stroke-width="2"/>
<circle cx="2794.7" cy="1879.4" r="7" fill="#d5c55a" fill-opacity="0.25" stroke="#d5c55a" stroke-opacity="0.7" stroke-width="2"/>
<circle cx="2870.08" cy="1895.47" r="7" fill="#d5c55a" fill-opacity="0.25" stroke="#d5c55a" stroke-opacity="0.7" stroke-width="2"/>
<circle cx="2945.47" cy="1869.39" r="7" fill="#d5c55a" fill-opacity="0.25" stroke="#d5c55a" stroke-opacity="0.7" stroke-width="2"/>
<circle cx="3020.85" cy="1887.3" r="7" fill="#d5c55a" fill-opacity="0.25" stroke="#d5c55a" stroke-opacity="0.7" stroke-width="2"/>
<circle cx="3096.23" cy="1881.77" r="7" fill="#d5c55a" fill-opacity="0.25" stroke="#d5c55a" stroke-opacity="0.7" stroke-width="2"/>
<circle cx="3171.62" cy="1889.94" r="7" fill="#d5c55a" fill-opacity="0.25" stroke="#d5c55a" stroke-opacity="0.7" stroke-width="2"/>
<path d="M985.5,1703.41 C1008.12,1693.93 1037.35,1676.73 1060.88,1671.8 C1082.58,1671.8 1113.76,1671.8 1136.27,1671.8 C1158.99,1673.39 1189,1679.41 1211.65,1682.34 C1234.23,1685.26 1264.63,1687.38 1287.03,1691.3 C1309.86,1695.28 1339.62,1707.65 1362.42,1708.68 C1384.85,1709.7 1415.1,1698.94 1437.8,1698.14 C1460.33,1697.36 1491.46,1707.21 1513.18,1703.41 C1536.69,1699.31 1565.04,1676.73 1588.57,1671.8 C1610.27,1671.8 1642.34,1671.8 1663.95,1671.8 C1687.57,1677 1715.72,1700.04 1739.33,1704.99 C1760.95,1709.53 1792.13,1702.86 1814.72,1703.41 C1837.36,1703.97 1868.67,1713.18 1890.1,1708.68 C1913.9,1703.69 1941.98,1674.67 1965.48,1671.8 C1987.21,1671.8 2017.98,1686.24 2040.87,1690.24 C2063.21,1694.15 2093.68,1698.54 2116.25,1698.14 C2138.91,1697.75 2169.15,1691.54 2191.63,1687.61 C2214.38,1683.63 2247.16,1671.8 2267.02,1671.8 C2292.39,1679.78 2317.21,1727.99 2342.4,1735.03 C2362.44,1740.63 2395.39,1713.17 2417.78,1713.95 C2440.62,1714.75 2470.55,1740.3 2493.17,1740.3 C2515.78,1740.3 2545.39,1719.62 2568.55,1713.95 C2590.62,1708.55 2622.12,1709.51 2643.93,1703.41 C2667.35,1696.87 2696.85,1671.8 2719.32,1671.8 C2742.08,1672.2 2771.09,1699.45 2794.7,1706.05 C2816.32,1712.09 2848.94,1718.75 2870.08,1713.95 C2894.17,1708.48 2921.74,1675.12 2945.47,1671.8 C2966.97,1671.8 2997.92,1691.27 3020.85,1692.88 C3043.15,1694.43 3073.54,1683.13 3096.23,1682.34 C3118.77,1681.55 3149,1686.03 3171.62,1687.61" fill="none" stroke="#9a6ddd" stroke-width="6" stroke-linejoin="round" stroke-linecap="round"/>
<circle cx="985.5" cy="1703.41" r="7" fill="#9a6ddd" fill-opacity="0.25" stroke="#9a6ddd" stroke-opacity="0.7" stroke-width="2"/>
<circle cx="1060.88" cy="1671.8" r="7" fill="#9a6ddd" fill-opacity="0.25" stroke="#9a6ddd" stroke-opacity="0.7" stroke-width="2"/>
<circle cx="1136.27" cy="1671.8" r="7" fill="#9a6ddd" fill-opacity="0.25" stroke="#9a6ddd" stroke-opacity="0.7" stroke-width="2"/>
<circle cx="1211.65" cy="1682.34" r="7" fill="#9a6ddd" fill-opacity="0.25" stroke="#9a6ddd" stroke-opacity="0.7" stroke-width="2"/>
<circle cx="1287.03" cy="1691.3" r="7" fill="#9a6ddd" fill-opacity="0.25" stroke="#9a6ddd" stroke-opacity="0.7" stroke-width="2"/>
<circle cx="1362.42" cy="1708.68" r="7" fill="#9a6ddd" fill-opacity="0.25" stroke="#9a6ddd" stroke-opacity="0.7" stroke-width="2"/>
<circle cx="1437.8" cy="1698.14" r="7" fill="#9a6ddd" fill-opacity="0.25" stroke="#9a6ddd" stroke-opacity="0.7" stroke-width="2"/>
<circle cx="1513.18" cy="1703.41" r="7" fill="#9a6ddd" fill-opacity="0.25" stroke="#9a6ddd" stroke-opacity="0.7" stroke-width="2"/>
<circle cx="1588.57" cy="1671.8" r="7" fill="#9a6ddd" fill-opacity="0.25" stroke="#9a6ddd" stroke-opacity="0.7" stroke-width="2"/>
<circle cx="1663.95" cy="1671.8" r="7" fill="#9a6ddd" fill-opacity="0.25" stroke="#9a6ddd" stroke-opacity="0.7" stroke-width="2"/>
<circle cx="1739.33" cy="1704.99" r="7" fill="#9a6ddd" fill-opacity="0.25" stroke="#9a6ddd" stroke-opacity="0.7" stroke-width="2"/>
<circle cx="1814.72" cy="1703.41" r="7" fill="#9a6ddd" fill-opacity="0.25" stroke="#9a6ddd" stroke-opacity="0.7" stroke-width="2"/>
<circle cx="1890.1" cy="1708.68" r="7" fill="#9a6ddd" fill-opacity="0.25" stroke="#9a6ddd" stroke-opacity="0.7" stroke-width="2"/>
<circle cx="1965.48" cy="1671.8" r="7" fill="#9a6ddd" fill-opacity="0.25" stroke="#9a6ddd" stroke-opacity="0.7" stroke-width="2"/>
<circle cx="2040.87" cy="1690.24" r="7" fill="#9a6ddd" fill-opacity="0.25" stroke="#9a6ddd" stroke-opacity="0.7" stroke-width="2"/>
<circle cx="2116.25" cy="1698.14" r="7" fill="#9a6ddd" fill-opacity="0.25" stroke="#9a6ddd" stroke-opacity="0.7" stroke-width="2"/>
<circle cx="2191.63" cy="1687.61" r="7" fill="#9a6ddd" fill-opacity="0.25" stroke="#9a6ddd" stroke-opacity="0.7" stroke-width="2"/>
<circle cx="2267.02" cy="1671.8" r="7" fill="#9a6ddd" fill-opacity="0.25" stroke="#9a6ddd" stroke-opacity="0.7" stroke-width="2"/>
<circle cx="2342.4" cy="1735.03" r="7" fill="#9a6ddd" fill-opacity="0.25" stroke="#9a6ddd" stroke-opacity="0.7" stroke-width="2"/>
<circle cx="2417.78" cy="1713.95" r="7" fill="#9a6ddd" fill-opacity="0.25" stroke="#9a6ddd" stroke-opacity="0.7" stroke-width="2"/>
<circle cx="2493.17" cy="1740.3" r="7" fill="#9a6ddd" fill-opacity="0.25" stroke="#9a6ddd" stroke-opacity="0.7" stroke-width="2"/>
<circle cx="2568.55" cy="1713.95" r="7" fill="#9a6ddd" fill-opacity="0.25" stroke="#9a6ddd" stroke-opacity="0.7" stroke-width="2"/>
<circle cx="2643.93" cy="1703.41" r="7" fill="#9a6ddd" fill-opacity="0.25" stroke="#9a6ddd" stroke-opacity="0.7" stroke-width="2"/>
<circle cx="2719.32" cy="1671.8" r="7" fill="#9a6ddd" fill-opacity="0.25" stroke="#9a6ddd" stroke-opacity="0.7" stroke-width="2"/>
<circle cx="2794.7" cy="1706.05" r="7" fill="#9a6ddd" fill-opacity="0.25" stroke="#9a6ddd" stroke-opacity="0.7" stroke-width="2"/>
<circle cx="2870.08" cy="1713.95" r="7" fill="#9a6ddd" fill-opacity="0.25" stroke="#9a6ddd" stroke-opacity="0.7" stroke-width="2"/>
<circle cx="2945.47" cy="1671.8" r="7" fill="#9a6ddd" fill-opacity="0.25" stroke="#9a6ddd" stroke-opacity="0.7" stroke-width="2"/>
<circle cx="3020.85" cy="1692.88" r="7" fill="#9a6ddd" fill-opacity="0.25" stroke="#9a6ddd" stroke-opacity="0.7" stroke-width="2"/>
<circle cx="3096.23" cy="1682.34" r="7" fill="#9a6ddd" fill-opacity="0.25" stroke="#9a6ddd" stroke-opacity="0.7" stroke-width="2"/>
<circle cx="3171.62" cy="1687.61" r="7" fill="#9a6ddd" fill-opacity="0.25" stroke="#9a6ddd" stroke-opacity="0.7" stroke-width="2"/>
<path d="M985.5,1692.88 C1008.12,1689.71 1038.22,1685.11 1060.88,1682.34 C1083.45,1679.58 1113.59,1675.62 1136.27,1674.43 C1158.82,1673.25 1189.28,1672.09 1211.65,1674.43 C1234.51,1676.83 1264.24,1686.66 1287.03,1690.24 C1309.47,1693.77 1339.74,1696.96 1362.42,1698.14 C1384.97,1699.33 1415.21,1697.36 1437.8,1698.14 C1460.44,1698.94 1490.78,1704.98 1513.18,1703.41 C1536.01,1701.82 1566.36,1686.05 1588.57,1687.61 C1611.59,1689.22 1640.85,1711.93 1663.95,1713.95 C1686.08,1715.89 1716.57,1703.41 1739.33,1700.78 C1761.8,1698.19 1792.66,1700.8 1814.72,1696.56 C1837.89,1692.11 1868.12,1671.8 1890.1,1671.8 C1913.35,1673.67 1941.98,1705.81 1965.48,1708.68 C1987.21,1711.34 2017.98,1694.24 2040.87,1690.24 C2063.21,1686.34 2093.6,1682.73 2116.25,1682.34 C2138.83,1681.94 2169.23,1689.17 2191.63,1687.61 C2214.46,1686.01 2244.27,1672.6 2267.02,1671.8 C2289.5,1671.8 2319.79,1682.34 2342.4,1682.34 C2365.02,1682.34 2395.17,1671.8 2417.78,1671.8 C2440.4,1671.8 2471.36,1676.24 2493.17,1682.34 C2516.59,1688.89 2545.13,1710.68 2568.55,1713.95 C2590.36,1717 2622.12,1709.51 2643.93,1703.41 C2667.35,1696.87 2696.7,1671.8 2719.32,1671.8 C2741.93,1671.8 2771.59,1701.8 2794.7,1703.41 C2816.82,1704.96 2847.07,1684.75 2870.08,1682.34 C2892.3,1680.01 2922.85,1687.61 2945.47,1687.61 C2968.08,1687.61 2998.32,1681.55 3020.85,1682.34 C3043.55,1683.13 3073.54,1692.08 3096.23,1692.88 C3118.77,1693.66 3149,1689.19 3171.62,1687.61" fill="none" stroke="#6cb8b1" stroke-width="6" stroke-linejoin="round" stroke-linecap="round"/>
<circle cx="985.5" cy="1692.88" r="7" fill="#6cb8b1" fill-opacity="0.25" stroke="#6cb8b1" stroke-opacity="0.7" stroke-width="2"/>
<circle cx="1060.88" cy="1682.34" r="7" fill="#6cb8b1" fill-opacity="0.25" stroke="#6cb8b1" stroke-opacity="0.7" stroke-width="2"/>
<circle cx="1136.27" cy="1674.43" r="7" fill="#6cb8b1" fill-opacity="0.25" stroke="#6cb8b1" stroke-opacity="0.7" stroke-width="2"/>
<circle cx="1211.65" cy="1674.43" r="7" fill="#6cb8b1" fill-opacity="0.25" stroke="#6cb8b1" stroke-opacity="0.7" stroke-width="2"/>
<circle cx="1287.03" cy="1690.24" r="7" fill="#6cb8b1" fill-opacity="0.25" stroke="#6cb8b1" stroke-opacity="0.7" stroke-width="2"/>
<circle cx="1362.42" cy="1698.14" r="7" fill="#6cb8b1" fill-opacity="0.25" stroke="#6cb8b1" stroke-opacity="0.7" stroke-width="2"/>
<circle cx="1437.8" cy="1698.14" r="7" fill="#6cb8b1" fill-opacity="0.25" stroke="#6cb8b1" stroke-opacity="0.7" stroke-width="2"/>
<circle cx="1513.18" cy="1703.41" r="7" fill="#6cb8b1" fill-opacity="0.25" stroke="#6cb8b1" stroke-opacity="0.7" stroke-width="2"/>
<circle cx="1588.57" cy="1687.61" r="7" fill="#6cb8b1" fill-opacity="0.25" stroke="#6cb8b1" stroke-opacity="0.7" stroke-width="2"/>
<circle cx="1663.95" cy="1713.95" r="7" fill="#6cb8b1" fill-opacity="0.25" stroke="#6cb8b1" stroke-opacity="0.7" stroke-width="2"/>
<circle cx="1739.33" cy="1700.78" r="7" fill="#6cb8b1" fill-opacity="0.25" stroke="#6cb8b1" stroke-opacity="0.7" stroke-width="2"/>
<circle cx="1814.72" cy="1696.56" r="7" fill="#6cb8b1" fill-opacity="0.25" stroke="#6cb8b1" stroke-opacity="0.7" stroke-width="2"/>
<circle cx="1890.1" cy="1671.8" r="7" fill="#6cb8b1" fill-opacity="0.25" stroke="#6cb8b1" stroke-opacity="0.7" stroke-width="2"/>
<circle cx="1965.48" cy="1708.68" r="7" fill="#6cb8b1" fill-opacity="0.25" stroke="#6cb8b1" stroke-opacity="0.7" stroke-width="2"/>
<circle cx="2040.87" cy="1690.24" r="7" fill="#6cb8b1" fill-opacity="0.25" stroke="#6cb8b1" stroke-opacity="0.7" stroke-width="2"/>
<circle cx="2116.25" cy="1682.34" r="7" fill="#6cb8b1" fill-opacity="0.25" stroke="#6cb8b1" stroke-opacity="0.7" stroke-width="2"/>
<circle cx="2191.63" cy="1687.61" r="7" fill="#6cb8b1" fill-opacity="0.25" stroke="#6cb8b1" stroke-opacity="0.7" stroke-width="2"/>
<circle cx="2267.02" cy="1671.8" r="7" fill="#6cb8b1" fill-opacity="0.25" stroke="#6cb8b1" stroke-opacity="0.7" stroke-width="2"/>
<circle cx="2342.4" cy="1682.34" r="7" fill="#6cb8b1" fill-opacity="0.25" stroke="#6cb8b1" stroke-opacity="0.7" stroke-width="2"/>
<circle cx="2417.78" cy="1671.8" r="7" fill="#6cb8b1" fill-opacity="0.25" stroke="#6cb8b1" stroke-opacity="0.7" stroke-width="2"/>
<circle cx="2493.17" cy="1682.34" r="7" fill="#6cb8b1" fill-opacity="0.25" stroke="#6cb8b1" stroke-opacity="0.7" stroke-width="2"/>
<circle cx="2568.55" cy="1713.95" r="7" fill="#6cb8b1" fill-opacity="0.25" stroke="#6cb8b1" stroke-opacity="0.7" stroke-width="2"/>
<circle cx="2643.93" cy="1703.41" r="7" fill="#6cb8b1" fill-opacity="0.25" stroke="#6cb8b1" stroke-opacity="0.7" stroke-width="2"/>
<circle cx="2719.32" cy="1671.8" r="7" fill="#6cb8b1" fill-opacity="0.25" stroke="#6cb8b1" stroke-opacity="0.7" stroke-width="2"/>
<circle cx="2794.7" cy="1703.41" r="7" fill="#6cb8b1" fill-opacity="0.25" stroke="#6cb8b1" stroke-opacity="0.7" stroke-width="2"/>
<circle cx="2870.08" cy="1682.34" r="7" fill="#6cb8b1" fill-opacity="0.25" stroke="#6cb8b1" stroke-opacity="0.7" stroke-width="2"/>
<circle cx="2945.47" cy="1687.61" r="7" fill="#6cb8b1" fill-opacity="0.25" stroke="#6cb8b1" stroke-opacity="0.7" stroke-width="2"/>
<circle cx="3020.85" cy="1682.34" r="7" fill="#6cb8b1" fill-opacity="0.25" stroke="#6cb8b1" stroke-opacity="0.7" stroke-width="2"/>
<circle cx="3096.23" cy="1692.88" r="7" fill="#6cb8b1" fill-opacity="0.25" stroke="#6cb8b1" stroke-opacity="0.7" stroke-width="2"/>
<circle cx="3171.62" cy="1687.61" r="7" fill="#6cb8b1" fill-opacity="0.25" stroke="#6cb8b1" stroke-opacity="0.7" stroke-width="2"/>
<path d="M985.5,1729.76 C1008.12,1718.69 1037.08,1699.53 1060.88,1692.88 C1082.31,1686.88 1113.87,1690.74 1136.27,1687.61 C1159.1,1684.42 1189.94,1671.8 1211.65,1671.8 C1235.17,1674.92 1263.97,1697.96 1287.03,1707.63 C1309.2,1716.92 1339.1,1730.79 1362.42,1735.03 C1384.33,1739.01 1415.21,1735.82 1437.8,1735.03 C1460.44,1734.24 1491.46,1735.07 1513.18,1729.76 C1536.69,1724.01 1565.69,1698.94 1588.57,1698.14 C1610.92,1697.36 1641.6,1715.9 1663.95,1724.49 C1686.83,1733.29 1716.45,1755.3 1739.33,1756.1 C1761.68,1756.89 1792.37,1738.35 1814.72,1729.76 C1837.6,1720.96 1866.81,1700.59 1890.1,1698.14 C1912.04,1695.84 1942.73,1709.98 1965.48,1713.95 C1987.96,1717.88 2018.25,1724.49 2040.87,1724.49 C2063.48,1724.49 2093.55,1716.33 2116.25,1713.95 C2138.78,1711.59 2170.2,1714.67 2191.63,1708.68 C2215.43,1702.03 2247.36,1671.8 2267.02,1671.8 C2292.59,1678.95 2316.82,1743.68 2342.4,1750.84 C2362.05,1756.33 2395.17,1713.95 2417.78,1713.95 C2440.4,1713.95 2470.55,1739.77 2493.17,1750.84 C2515.78,1761.9 2548.51,1792.62 2568.55,1787.72 C2593.74,1781.56 2619.07,1733.07 2643.93,1713.95 C2664.3,1698.3 2697.05,1671.8 2719.32,1671.8 C2742.28,1672.6 2770.85,1707.55 2794.7,1719.22 C2816.08,1729.68 2849.44,1749.9 2870.08,1745.57 C2894.67,1740.41 2920.66,1693.68 2945.47,1687.61 C2965.89,1682.61 2997.81,1705.46 3020.85,1708.68 C3043.04,1711.78 3073.73,1710.26 3096.23,1708.68 C3118.96,1707.09 3149,1701.31 3171.62,1698.14" fill="none" stroke="#56a64b" stroke-width="6" stroke-linejoin="round" stroke-linecap="round"/>
<circle cx="985.5" cy="1729.76" r="7" fill="#56a64b" fill-opacity="0.25" stroke="#56a64b" stroke-opacity="0.7" stroke-width="2"/>
<circle cx="1060.88" cy="1692.88" r="7" fill="#56a64b" fill-opacity="0.25" stroke="#56a64b" stroke-opacity="0.7" stroke-width="2"/>
<circle cx="1136.27" cy="1687.61" r="7" fill="#56a64b" fill-opacity="0.25" stroke="#56a64b" stroke-opacity="0.7" stroke-width="2"/>
<circle cx="1211.65" cy="1671.8" r="7" fill="#56a64b" fill-opacity="0.25" stroke="#56a64b" stroke-opacity="0.7" stroke-width="2"/>
<circle cx="1287.03" cy="1707.63" r="7" fill="#56a64b" fill-opacity="0.25" stroke="#56a64b" stroke-opacity="0.7" stroke-width="2"/>
<circle cx="1362.42" cy="1735.03" r="7" fill="#56a64b" fill-opacity="0.25" stroke="#56a64b" stroke-opacity="0.7" stroke-width="2"/>
<circle cx="1437.8" cy="1735.03" r="7" fill="#56a64b" fill-opacity="0.25" stroke="#56a64b" stroke-opacity="0.7" stroke-width="2"/>
<circle cx="1513.18" cy="1729.76" r="7" fill="#56a64b" fill-opacity="0.25" stroke="#56a64b" stroke-opacity="0.7" stroke-width="2"/>
<circle cx="1588.57" cy="1698.14" r="7" fill="#56a64b" fill-opacity="0.25" stroke="#56a64b" stroke-opacity="0.7" stroke-width="2"/>
<circle cx="1663.95" cy="1724.49" r="7" fill="#56a64b" fill-opacity="0.25" stroke="#56a64b" stroke-opacity="0.7" stroke-width="2"/>
<circle cx="1739.33" cy="1756.1" r="7" fill="#56a64b" fill-opacity="0.25" stroke="#56a64b" stroke-opacity="0.7" stroke-width="2"/>
<circle cx="1814.72" cy="1729.76" r="7" fill="#56a64b" fill-opacity="0.25" stroke="#56a64b" stroke-opacity="0.7" stroke-width="2"/>
<circle cx="1890.1" cy="1698.14" r="7" fill="#56a64b" fill-opacity="0.25" stroke="#56a64b" stroke-opacity="0.7" stroke-width="2"/>
<circle cx="1965.48" cy="1713.95" r="7" fill="#56a64b" fill-opacity="0.25" stroke="#56a64b" stroke-opacity="0.7" stroke-width="2"/>
<circle cx="2040.87" cy="1724.49" r="7" fill="#56a64b" fill-opacity="0.25" stroke="#56a64b" stroke-opacity="0.7" stroke-width="2"/>
<circle cx="2116.25" cy="1713.95" r="7" fill="#56a64b" fill-opacity="0.25" stroke="#56a64b" stroke-opacity="0.7" stroke-width="2"/>
<circle cx="2191.63" cy="1708.68" r="7" fill="#56a64b" fill-opacity="0.25" stroke="#56a64b" stroke-opacity="0.7" stroke-width="2"/>
<circle cx="2267.02" cy="1671.8" r="7" fill="#56a64b" fill-opacity="0.25" stroke="#56a64b" stroke-opacity="0.7" stroke-width="2"/>
<circle cx="2342.4" cy="1750.84" r="7" fill="#56a64b" fill-opacity="0.25" stroke="#56a64b" stroke-opacity="0.7" stroke-width="2"/>
<circle cx="2417.78" cy="1713.95" r="7" fill="#56a64b" fill-opacity="0.25" stroke="#56a64b" stroke-opacity="0.7" stroke-width="2"/>
<circle cx="2493.17" cy="1750.84" r="7" fill="#56a64b" fill-opacity="0.25" stroke="#56a64b" stroke-opacity="0.7" stroke-width="2"/>
<circle cx="2568.55" cy="1787.72" r="7" fill="#56a64b" fill-opacity="0.25" stroke="#56a64b" stroke-opacity="0.7" stroke-width="2"/>
<circle cx="2643.93" cy="1713.95" r="7" fill="#56a64b" fill-opacity="0.25" stroke="#56a64b" stroke-opacity="0.7" stroke-width="2"/>
<circle cx="2719.32" cy="1671.8" r="7" fill="#56a64b" fill-opacity="0.25" stroke="#56a64b" stroke-opacity="0.7" stroke-width="2"/>
<circle cx="2794.7" cy="1719.22" r="7" fill="#56a64b" fill-opacity="0.25" stroke="#56a64b" stroke-opacity="0.7" stroke-width="2"/>
<circle cx="2870.08" cy="1745.57" r="7" fill="#56a64b" fill-opacity="0.25" stroke="#56a64b" stroke-opacity="0.7" stroke-width="2"/>
<circle cx="2945.47" cy="1687.61" r="7" fill="#56a64b" fill-opacity="0.25" stroke="#56a64b" stroke-opacity="0.7" stroke-width="2"/>
<circle cx="3020.85" cy="1708.68" r="7" fill="#56a64b" fill-opacity="0.25" stroke="#56a64b" stroke-opacity="0.7" stroke-width="2"/>
<circle cx="3096.23" cy="1708.68" r="7" fill="#56a64b" fill-opacity="0.25" stroke="#56a64b" stroke-opacity="0.7" stroke-width="2"/>
<circle cx="3171.62" cy="1698.14" r="7" fill="#56a64b" fill-opacity="0.25" stroke="#56a64b" stroke-opacity="0.7" stroke-width="2"/>
</g>
<rect x="1615.5" y="1624.5" width="87" height="25" fill="#dcebd8" stroke="#56a64b" stroke-width="5"/>
<text x="1713.69" y="1646.4" font-size="27.81" font-weight="400" fill="#666666" textLength="98.21" lengthAdjust="spacingAndGlyphs">CSAT %</text>
<rect x="1834.5" y="1624.5" width="87" height="25" fill="#e2f1ef" stroke="#6cb8b1" stroke-width="5"/>
<text x="1933.93" y="1646.4" font-size="26.76" font-weight="400" fill="#666666" textLength="146.95" lengthAdjust="spacingAndGlyphs">Answered %</text>
<rect x="2103.2" y="1624.5" width="87" height="25" fill="#ece3f8" stroke="#9a6ddd" stroke-width="5"/>
<text x="2200.29" y="1646.4" font-size="26.76" font-weight="400" fill="#666666" textLength="150.63" lengthAdjust="spacingAndGlyphs">Deflection %</text>
<rect x="2373.5" y="1624.5" width="87" height="25" fill="#e4e4e4" stroke="#e8c547" stroke-width="5"/>
<text x="2472.94" y="1646.4" font-size="26.76" font-weight="400" fill="#666666" textLength="168.27" lengthAdjust="spacingAndGlyphs">Avg Sentiment</text>
<g transform="translate(986 2234) rotate(-33)"><text x="0" y="9" font-size="25.5" fill="#666666" text-anchor="end">10/9</text></g>
<g transform="translate(1061.38 2234) rotate(-33)"><text x="0" y="9" font-size="25.5" fill="#666666" text-anchor="end">10/10</text></g>
<g transform="translate(1136.77 2234) rotate(-33)"><text x="0" y="9" font-size="25.5" fill="#666666" text-anchor="end">10/11</text></g>
<g transform="translate(1212.15 2234) rotate(-33)"><text x="0" y="9" font-size="25.5" fill="#666666" text-anchor="end">10/12</text></g>
<g transform="translate(1287.53 2234) rotate(-33)"><text x="0" y="9" font-size="25.5" fill="#666666" text-anchor="end">10/13</text></g>
<g transform="translate(1362.92 2234) rotate(-33)"><text x="0" y="9" font-size="25.5" fill="#666666" text-anchor="end">10/14</text></g>
<g transform="translate(1438.3 2234) rotate(-33)"><text x="0" y="9" font-size="25.5" fill="#666666" text-anchor="end">10/15</text></g>
<g transform="translate(1513.68 2234) rotate(-33)"><text x="0" y="9" font-size="25.5" fill="#666666" text-anchor="end">10/16</text></g>
<g transform="translate(1589.07 2234) rotate(-33)"><text x="0" y="9" font-size="25.5" fill="#666666" text-anchor="end">10/17</text></g>
<g transform="translate(1664.45 2234) rotate(-33)"><text x="0" y="9" font-size="25.5" fill="#666666" text-anchor="end">10/18</text></g>
<g transform="translate(1739.83 2234) rotate(-33)"><text x="0" y="9" font-size="25.5" fill="#666666" text-anchor="end">10/19</text></g>
<g transform="translate(1815.22 2234) rotate(-33)"><text x="0" y="9" font-size="25.5" fill="#666666" text-anchor="end">10/20</text></g>
<g transform="translate(1890.6 2234) rotate(-33)"><text x="0" y="9" font-size="25.5" fill="#666666" text-anchor="end">10/21</text></g>
<g transform="translate(1965.98 2234) rotate(-33)"><text x="0" y="9" font-size="25.5" fill="#666666" text-anchor="end">10/22</text></g>
<g transform="translate(2041.37 2234) rotate(-33)"><text x="0" y="9" font-size="25.5" fill="#666666" text-anchor="end">10/23</text></g>
<g transform="translate(2116.75 2234) rotate(-33)"><text x="0" y="9" font-size="25.5" fill="#666666" text-anchor="end">10/24</text></g>
<g transform="translate(2192.13 2234) rotate(-33)"><text x="0" y="9" font-size="25.5" fill="#666666" text-anchor="end">10/25</text></g>
<g transform="translate(2267.52 2234) rotate(-33)"><text x="0" y="9" font-size="25.5" fill="#666666" text-anchor="end">10/26</text></g>
<g transform="translate(2342.9 2234) rotate(-33)"><text x="0" y="9" font-size="25.5" fill="#666666" text-anchor="end">10/27</text></g>
<g transform="translate(2418.28 2234) rotate(-33)"><text x="0" y="9" font-size="25.5" fill="#666666" text-anchor="end">10/28</text></g>
<g transform="translate(2493.67 2234) rotate(-33)"><text x="0" y="9" font-size="25.5" fill="#666666" text-anchor="end">10/29</text></g>
<g transform="translate(2569.05 2234) rotate(-33)"><text x="0" y="9" font-size="25.5" fill="#666666" text-anchor="end">10/30</text></g>
<g transform="translate(2644.43 2234) rotate(-33)"><text x="0" y="9" font-size="25.5" fill="#666666" text-anchor="end">10/31</text></g>
<g transform="translate(2719.82 2234) rotate(-33)"><text x="0" y="9" font-size="25.5" fill="#666666" text-anchor="end">11/1</text></g>
<g transform="translate(2795.2 2234) rotate(-33)"><text x="0" y="9" font-size="25.5" fill="#666666" text-anchor="end">11/2</text></g>
<g transform="translate(2870.58 2234) rotate(-33)"><text x="0" y="9" font-size="25.5" fill="#666666" text-anchor="end">11/3</text></g>
<g transform="translate(2945.97 2234) rotate(-33)"><text x="0" y="9" font-size="25.5" fill="#666666" text-anchor="end">11/4</text></g>
<g transform="translate(3021.35 2234) rotate(-33)"><text x="0" y="9" font-size="25.5" fill="#666666" text-anchor="end">11/5</text></g>
<g transform="translate(3096.73 2234) rotate(-33)"><text x="0" y="9" font-size="25.5" fill="#666666" text-anchor="end">11/6</text></g>
<g transform="translate(3172.12 2234) rotate(-33)"><text x="0" y="9" font-size="25.5" fill="#666666" text-anchor="end">11/7</text></g>
<g transform="translate(3247.5 2234) rotate(-33)"><text x="0" y="9" font-size="25.5" fill="#666666" text-anchor="end">11/8</text></g>
<g transform="translate(3337 1935) rotate(90)"><text x="0" y="0" font-size="27" fill="#666666" text-anchor="middle">Sentiment Score</text></g>
<text x="886.45" y="2394" font-size="39.17" font-weight="700" fill="#111827" textLength="390.77" lengthAdjust="spacingAndGlyphs">Conversation Counts</text>
</svg>
</body></html>
